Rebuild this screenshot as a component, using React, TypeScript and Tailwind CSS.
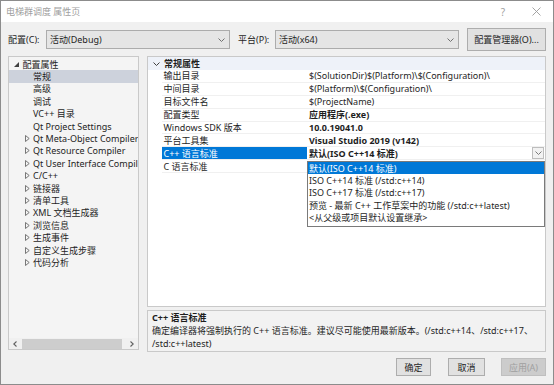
import React from "react";

function ChevDown({ c = "#606060" }: { c?: string }) {
  return (
    <svg width="7" height="4" viewBox="0 0 7 4" className="block">
      <polyline points="0.5,0.5 3.5,3.5 6.5,0.5" fill="none" stroke={c} strokeWidth="1" />
    </svg>
  );
}

function Combo({ text, w }: { text: string; w: string }) {
  return (
    <div className={`${w} h-[19px] border border-[#acacac] bg-[#e5e5e5] flex items-center pl-[3px] pr-[4px]`}>
      <span className="flex-1 whitespace-nowrap">{text}</span>
      <ChevDown c="#707070" />
    </div>
  );
}

function Expanded() {
  return (
    <svg width="5" height="5" viewBox="0 0 5 5" className="block">
      <path d="M5 0 L5 5 L0 5 Z" fill="#404040" />
    </svg>
  );
}

function Collapsed() {
  return (
    <svg width="5" height="7" viewBox="0 0 5 7" className="block">
      <path d="M0.5 0.5 L4.2 3.5 L0.5 6.5 Z" fill="none" stroke="#6a6a6a" strokeWidth="0.9" />
    </svg>
  );
}

const treeItems: { t: string; c?: boolean; sel?: boolean }[] = [
  { t: "常规", sel: true },
  { t: "高级" },
  { t: "调试" },
  { t: "VC++ 目录" },
  { t: "Qt Project Settings" },
  { t: "Qt Meta-Object Compiler", c: true },
  { t: "Qt Resource Compiler", c: true },
  { t: "Qt User Interface Compile", c: true },
  { t: "C/C++", c: true },
  { t: "链接器", c: true },
  { t: "清单工具", c: true },
  { t: "XML 文档生成器", c: true },
  { t: "浏览信息", c: true },
  { t: "生成事件", c: true },
  { t: "自定义生成步骤", c: true },
  { t: "代码分析", c: true },
];

const props: { l: string; v: string; b?: boolean; sel?: boolean }[] = [
  { l: "输出目录", v: "$(SolutionDir)$(Platform)\\$(Configuration)\\" },
  { l: "中间目录", v: "$(Platform)\\$(Configuration)\\" },
  { l: "目标文件名", v: "$(ProjectName)" },
  { l: "配置类型", v: "应用程序(.exe)", b: true },
  { l: "Windows SDK 版本", v: "10.0.19041.0", b: true },
  { l: "平台工具集", v: "Visual Studio 2019 (v142)", b: true },
  { l: "C++ 语言标准", v: "默认(ISO C++14 标准)", b: true, sel: true },
  { l: "C 语言标准", v: "" },
];

const options = [
  "默认(ISO C++14 标准)",
  "ISO C++14 标准 (/std:c++14)",
  "ISO C++17 标准 (/std:c++17)",
  "预览 - 最新 C++ 工作草案中的功能 (/std:c++latest)",
  "<从父级或项目默认设置继承>",
];

function Tree() {
  return (
    <div className="w-[131px] h-[294px] border border-[#c9c9c9] bg-[#f4f4f4] flex flex-col overflow-hidden">
      <div className="pt-[1px] flex flex-col">
        <div className="h-[12.4px] flex items-center pl-[5px] whitespace-nowrap">
          <div className="w-[8.5px] flex items-center">
            <Expanded />
          </div>
          <span>配置属性</span>
        </div>
        {treeItems.map((it) => (
          <div
            key={it.t}
            className={`h-[12.4px] flex items-center pl-[16px] whitespace-nowrap overflow-hidden ${it.sel ? "bg-[#cdd2dc]" : ""}`}
          >
            <div className="w-[8px] shrink-0 flex items-center">{it.c ? <Collapsed /> : null}</div>
            <span>{it.t}</span>
          </div>
        ))}
      </div>
      <div className="flex-1" />
      <div className="h-[11px] flex items-center bg-[#f0f0f0]">
        <div className="w-[12px] flex justify-center">
          <svg width="4" height="6" viewBox="0 0 4 6" className="block">
            <polyline points="3.5,0.5 0.8,3 3.5,5.5" fill="none" stroke="#606060" strokeWidth="1.1" />
          </svg>
        </div>
        <div className="ml-[1px] w-[100px] h-[10px] bg-[#cdcdcd]" />
        <div className="flex-1" />
        <div className="w-[12px] flex justify-center">
          <svg width="4" height="6" viewBox="0 0 4 6" className="block">
            <polyline points="0.5,0.5 3.2,3 0.5,5.5" fill="none" stroke="#606060" strokeWidth="1.1" />
          </svg>
        </div>
      </div>
    </div>
  );
}

function Grid() {
  return (
    <div className="h-[251px] border border-[#c9c9c9] bg-white relative flex flex-col">
      <div className="h-[13px] bg-[#eef2f9] flex items-center">
        <div className="w-[14px] flex justify-center pl-[2px]">
          <ChevDown c="#404040" />
        </div>
        <span className="pl-[2px] font-bold">常规属性</span>
      </div>
      {props.map((p) => (
        <div key={p.l} className="h-[12.9px] flex">
          <div className="w-[14px] shrink-0" />
          <div
            className={`w-[145px] shrink-0 flex items-center pl-[1.5px] whitespace-nowrap border-b border-[#f0f0f0] ${
              p.sel ? "bg-[#0078d7] text-white" : ""
            }`}
          >
            {p.l}
          </div>
          <div className={`flex-1 flex items-center pl-[2px] whitespace-nowrap border-b border-[#f0f0f0] relative ${p.b ? "font-bold" : ""}`}>
            {p.v}
            {p.sel ? (
              <div className="absolute right-[1px] top-[0px] w-[12px] h-[12px] border border-[#bdbdbd] bg-[#f2f2f2] flex items-center justify-center">
                <ChevDown c="#7a7a7a" />
              </div>
            ) : null}
          </div>
        </div>
      ))}
      <div className="absolute left-[159px] top-[104px] w-[238px] border border-[#7a7a7a] bg-white pb-[2px] flex flex-col">
        {options.map((o, i) => (
          <div
            key={o}
            className={`h-[12.4px] flex items-center pl-[1px] whitespace-nowrap ${i === 0 ? "bg-[#0078d7] text-white" : ""}`}
          >
            {o}
          </div>
        ))}
      </div>
    </div>
  );
}

export default function App() {
  return (
    <div className="w-[554px] h-[385px] bg-[#f0f0f0] border border-[#8c8c8c] flex flex-col font-['Noto_Sans','Noto_Sans_CJK_SC',sans-serif] text-[9px] text-[#1e1e1e] leading-none overflow-hidden">
      <div className="h-[21px] bg-white flex items-center shrink-0">
        <span className="ml-[5px] text-[#a0a0a0]">电梯群调度 属性页</span>
        <span className="ml-auto text-[#a0a0a0] text-[10px]">?</span>
        <div className="ml-[27px] mr-[12px]">
          <svg width="9" height="9" viewBox="0 0 9 9" className="block">
            <path d="M0.5 0.5 L8.5 8.5 M8.5 0.5 L0.5 8.5" stroke="#9a9a9a" strokeWidth="0.9" />
          </svg>
        </div>
      </div>

      <div className="mt-[6px] h-[23px] flex items-center pl-[7px] shrink-0">
        <span className="w-[38px] whitespace-nowrap">配置(C):</span>
        <Combo w="w-[184px]" text="活动(Debug)" />
        <span className="ml-[8px] w-[37px] whitespace-nowrap">平台(P):</span>
        <Combo w="w-[184px]" text="活动(x64)" />
        <div className="ml-[8px] w-[79px] h-[23px] border border-[#adadad] bg-[#e1e1e1] flex items-center justify-center whitespace-nowrap">
          配置管理器(O)...
        </div>
      </div>

      <div className="mt-[5px] flex items-start pl-[7px] gap-[8px] h-[296px] shrink-0">
        <Tree />
        <div className="w-[399px] flex flex-col gap-[3px]">
          <Grid />
          <div className="h-[42px] border border-[#c9c9c9] bg-[#f2f2f2] px-[4px] pt-[1px] leading-[12.9px]">
            <div className="font-bold">C++ 语言标准</div>
            <div>
              确定编译器将强制执行的 C++ 语言标准。建议尽可能使用最新版本。(/std:c++14、/std:c++17、
              <br />
              /std:c++latest)
            </div>
          </div>
        </div>
      </div>

      <div className="mt-[6px] h-[18px] flex justify-end pr-[7px] shrink-0">
        <div className="w-[35px] h-[18px] border border-[#adadad] bg-[#e1e1e1] flex items-center justify-center">确定</div>
        <div className="ml-[17px] w-[37px] h-[18px] border border-[#adadad] bg-[#e1e1e1] flex items-center justify-center">取消</div>
        <div className="ml-[16px] w-[45px] h-[18px] border border-[#bfbfbf] bg-[#cccccc] text-[#a0a0a0] flex items-center justify-center">应用(A)</div>
      </div>
    </div>
  );
}
